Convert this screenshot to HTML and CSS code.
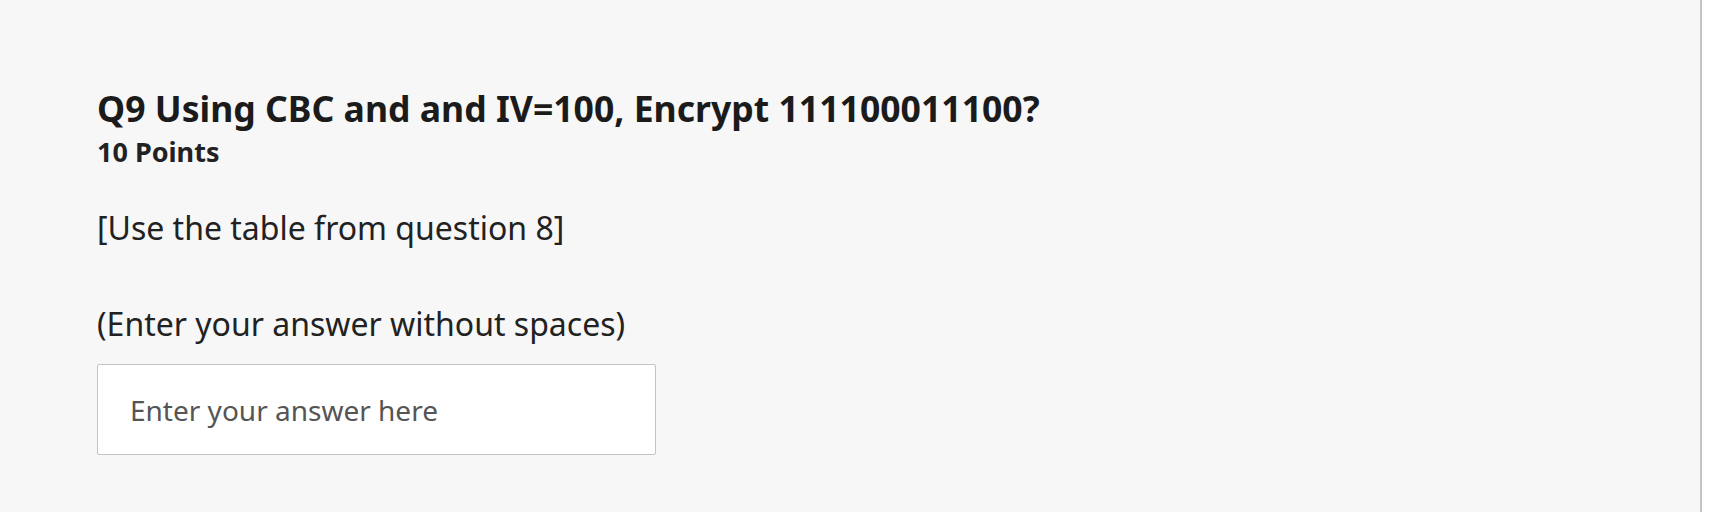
FILE: index.html
```html
<!DOCTYPE html>
<html>
<head>
<meta charset="utf-8">
<link rel="stylesheet" href="styles.css">
</head>
<body>
<div class="page">
  <div class="question">
    <h2 class="q-title">Q9 Using CBC and and IV=100, Encrypt 111100011100?</h2>
    <div class="q-points">10 Points</div>
    <p class="q-text">[Use the table from question 8]</p>
    <p class="q-hint">(Enter your answer without spaces)</p>
    <input class="answer" type="text" placeholder="Enter your answer here">
  </div>
</div>
</body>
</html>
```
FILE: styles.css
```css
html, body {
  margin: 0;
  padding: 0;
  background: #ffffff;
  font-family: "Noto Sans", "Open Sans", sans-serif;
}
.page {
  width: 1702px;
  height: 512px;
  background: #f7f7f7;
  border-right: 2px solid #c4c4c4;
  box-sizing: border-box;
}
.question {
  padding: 83px 0 0 97px;
}
.q-title {
  margin: 0;
  font-size: 35.6px;
  line-height: 50px;
  font-weight: 700;
  color: #1b1b1b;
}
.q-points {
  margin-top: 2px;
  font-size: 27px;
  line-height: 34px;
  font-weight: 700;
  color: #222;
}
.q-text {
  margin: 39px 0 0;
  font-size: 32px;
  line-height: 40px;
  color: #222;
}
.q-hint {
  margin: 56px 0 0;
  font-size: 32px;
  line-height: 40px;
  color: #222;
}
.answer {
  display: block;
  margin-top: 20px;
  width: 559px;
  height: 91px;
  box-sizing: border-box;
  border: 1px solid #c4c4c4;
  border-radius: 2px;
  background: #fff;
  padding: 0 32px;
  font-family: "Noto Sans", "Open Sans", sans-serif;
  font-size: 28px;
  color: #222;
  outline: none;
}
.answer::placeholder {
  color: #555;
  opacity: 1;
}
```
